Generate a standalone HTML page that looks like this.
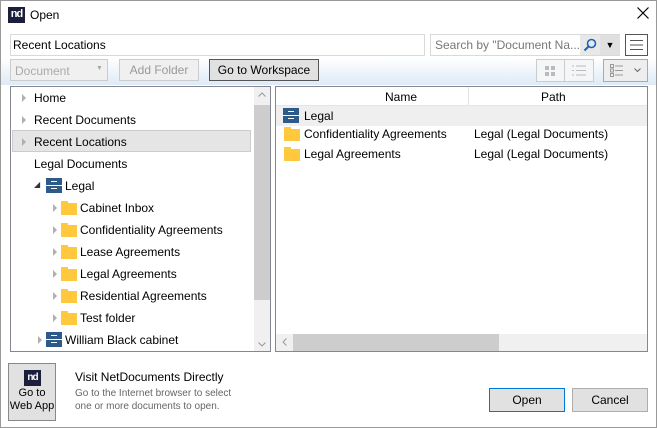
<!DOCTYPE html><html><head><style>
*{box-sizing:border-box;margin:0;padding:0}
body{width:657px;height:428px;background:#fff;font-family:"Liberation Sans",sans-serif;font-size:12px;color:#000;position:relative;overflow:hidden}
.a{position:absolute}
.btn{position:absolute;border:1px solid #adadad;background:#e1e1e1;text-align:center}
.nd{background:#1b1f3b;color:#fff;font-weight:bold;font-size:11px;line-height:15px;text-align:center;width:17px;height:16px;letter-spacing:-1px}
.tri{position:absolute;width:0;height:0;border-top:4px solid transparent;border-bottom:4px solid transparent;border-left:4px solid #b0b0b0}
.fold{position:absolute;width:16px;height:12px;background:#ffc83d}
.fold:before{content:"";position:absolute;left:0;top:-2px;width:7px;height:3px;background:#ffc83d}
.cab{position:absolute;width:16px;height:15px;background:#2d5a88}
.cab:before,.cab:after{content:"";position:absolute;left:5px;width:6px;height:1px;background:#fff}
.cab:before{top:3px}.cab:after{top:10px}
.cab i{position:absolute;left:0;top:7px;width:16px;height:1px;background:#fff}
.t{position:absolute;font-size:12px;white-space:nowrap}
</style></head><body>
<div class="a" style="left:0;top:0;width:657px;height:428px;border:1px solid #999"></div>
<div class="a nd" style="left:8px;top:7px">nd</div>
<div class="t" style="left:30px;top:8px">Open</div>
<svg class="a" style="left:637px;top:7px" width="12" height="12"><path d="M0.5 0.5L11.5 11.5M11.5 0.5L0.5 11.5" stroke="#000" stroke-width="1.2"/></svg>
<div class="a" style="left:10px;top:34px;width:415px;height:22px;border:1px solid #d9d9d9"></div>
<div class="t" style="left:13px;top:38px">Recent Locations</div>
<div class="a" style="left:430px;top:34px;width:190px;height:22px;border:1px solid #d9d9d9"></div>
<div class="t" style="left:435px;top:38px;color:#777">Search by "Document Na...</div>
<div class="a" style="left:580px;top:35px;width:20px;height:20px;background:#e8e8e8"></div>
<svg class="a" style="left:583px;top:38px" width="14" height="14"><circle cx="8.5" cy="5.5" r="4" stroke="#1565c0" stroke-width="1.6" fill="none"/><path d="M5.5 8.5L1.5 12.5" stroke="#1565c0" stroke-width="2"/></svg>
<div class="a" style="left:600px;top:35px;width:20px;height:20px;background:#e0e0e0;font-size:9px;text-align:center;line-height:20px">▼</div>
<div class="a" style="left:625px;top:34px;width:23px;height:22px;border:1px solid #555"></div>
<svg class="a" style="left:630px;top:39px" width="13" height="12"><path d="M0 1.5H13M0 6H13M0 10.5H13" stroke="#555" stroke-width="1"/></svg>
<div class="a" style="left:1px;top:58px;width:655px;height:27px;background:linear-gradient(#fff,#ddeaf7)"></div>
<div class="a" style="left:10px;top:59px;width:98px;height:22px;border:1px solid #ccc;background:#f0f0f0"></div>
<div class="t" style="left:15px;top:64px;color:#aaa">Document</div>
<div class="t" style="left:96px;top:65px;color:#aaa;font-size:7px">▼</div>
<div class="btn" style="left:119px;top:59px;width:80px;height:22px;border-color:#ccc;background:#f0f0f0;color:#999;line-height:20px">Add Folder</div>
<div class="btn" style="left:209px;top:59px;width:110px;height:22px;border-color:#555;line-height:20px">Go to Workspace</div>
<div class="a" style="left:536px;top:59px;width:58px;height:23px;border:1px solid #ccc;background:#f4f6f8"></div>
<div class="a" style="left:564px;top:59px;width:1px;height:23px;background:#ccc"></div>
<svg class="a" style="left:545px;top:66px" width="10" height="10"><rect x="0" y="0" width="4" height="4" fill="#bbb"/><rect x="6" y="0" width="4" height="4" fill="#bbb"/><rect x="0" y="6" width="4" height="4" fill="#bbb"/><rect x="6" y="6" width="4" height="4" fill="#bbb"/></svg>
<svg class="a" style="left:572px;top:65px" width="14" height="11"><path d="M0 1H2M4 1H14M0 5.5H2M4 5.5H14M0 10H2M4 10H14" stroke="#bbb"/></svg>
<div class="a" style="left:603px;top:59px;width:45px;height:23px;border:1px solid #aaa;background:#eee"></div>
<svg class="a" style="left:610px;top:64px" width="14" height="13"><rect x="0.5" y="0.5" width="3" height="3" fill="none" stroke="#999"/><rect x="0.5" y="5" width="3" height="3" fill="none" stroke="#999"/><rect x="0.5" y="9.5" width="3" height="3" fill="none" stroke="#999"/><path d="M5 2H13M5 6.5H13M5 11H13" stroke="#999"/></svg>
<svg class="a" style="left:634px;top:68px" width="7" height="5"><path d="M0.5 0.5L3.5 3.5L6.5 0.5" stroke="#666" fill="none"/></svg>
<!-- left pane -->
<div class="a" style="left:10px;top:86px;width:261px;height:266px;border:1px solid #828790"></div>
<div class="a" style="left:254px;top:87px;width:16px;height:264px;background:#f0f0f0"></div>
<div class="a" style="left:254px;top:105px;width:16px;height:195px;background:#cdcdcd"></div>
<svg class="a" style="left:258px;top:92px" width="8" height="5"><path d="M0.5 4.5L4 1L7.5 4.5" stroke="#999" fill="none"/></svg>
<svg class="a" style="left:258px;top:342px" width="8" height="5"><path d="M0.5 0.5L4 4L7.5 0.5" stroke="#999" fill="none"/></svg>
<div class="a" style="left:12px;top:130px;width:239px;height:22px;background:#e5e5e5;border:1px solid #ccc"></div>
<div class="tri" style="left:22px;top:94px"></div><div class="t" style="left:34px;top:91px">Home</div>
<div class="tri" style="left:22px;top:116px"></div><div class="t" style="left:34px;top:113px">Recent Documents</div>
<div class="tri" style="left:22px;top:138px"></div><div class="t" style="left:34px;top:135px">Recent Locations</div>
<div class="t" style="left:34px;top:157px">Legal Documents</div>
<div class="t" style="left:34px;top:180px;font-size:8px;color:#333">◢</div>
<div class="cab" style="left:46px;top:178px"><i></i></div><div class="t" style="left:65px;top:179px">Legal</div>
<div class="tri" style="left:53px;top:204px"></div><div class="fold" style="left:61px;top:203px"></div><div class="t" style="left:80px;top:201px">Cabinet Inbox</div>
<div class="tri" style="left:53px;top:226px"></div><div class="fold" style="left:61px;top:225px"></div><div class="t" style="left:80px;top:223px">Confidentiality Agreements</div>
<div class="tri" style="left:53px;top:248px"></div><div class="fold" style="left:61px;top:247px"></div><div class="t" style="left:80px;top:245px">Lease Agreements</div>
<div class="tri" style="left:53px;top:270px"></div><div class="fold" style="left:61px;top:269px"></div><div class="t" style="left:80px;top:267px">Legal Agreements</div>
<div class="tri" style="left:53px;top:292px"></div><div class="fold" style="left:61px;top:291px"></div><div class="t" style="left:80px;top:289px">Residential Agreements</div>
<div class="tri" style="left:53px;top:314px"></div><div class="fold" style="left:61px;top:313px"></div><div class="t" style="left:80px;top:311px">Test folder</div>
<div class="tri" style="left:38px;top:336px"></div><div class="cab" style="left:46px;top:332px"><i></i></div><div class="t" style="left:65px;top:333px">William Black cabinet</div>
<!-- right pane -->
<div class="a" style="left:275px;top:86px;width:373px;height:266px;border:1px solid #828790"></div>
<div class="a" style="left:276px;top:87px;width:371px;height:19px;border-bottom:1px solid #e5e5e5"></div>
<div class="a" style="left:468px;top:87px;width:1px;height:19px;background:#e5e5e5"></div>
<div class="t" style="left:385px;top:90px">Name</div>
<div class="t" style="left:541px;top:90px">Path</div>
<div class="a" style="left:276px;top:106px;width:371px;height:20px;background:#efefef"></div>
<div class="cab" style="left:283px;top:108px"><i></i></div><div class="t" style="left:304px;top:109px">Legal</div>
<div class="fold" style="left:284px;top:129px"></div><div class="t" style="left:304px;top:127px">Confidentiality Agreements</div><div class="t" style="left:474px;top:127px">Legal (Legal Documents)</div>
<div class="fold" style="left:284px;top:149px"></div><div class="t" style="left:304px;top:147px">Legal Agreements</div><div class="t" style="left:474px;top:147px">Legal (Legal Documents)</div>
<div class="a" style="left:276px;top:334px;width:371px;height:17px;background:#f0f0f0"></div>
<div class="a" style="left:293px;top:334px;width:206px;height:17px;background:#cdcdcd"></div>
<svg class="a" style="left:282px;top:338px" width="5" height="8"><path d="M4.5 0.5L1 4L4.5 7.5" stroke="#999" fill="none"/></svg>
<!-- bottom -->
<div class="btn" style="left:8px;top:363px;width:48px;height:58px;background:#e1e1e1;border-color:#888"></div>
<div class="a nd" style="left:24px;top:370px;font-size:10px">nd</div>
<div class="t" style="left:8px;top:387px;width:48px;text-align:center;font-size:11px;line-height:13px">Go to<br>Web App</div>
<div class="t" style="left:75px;top:370px">Visit NetDocuments Directly</div>
<div class="t" style="left:75px;top:387px;font-size:10px;color:#666;line-height:13px">Go to the Internet browser to select<br>one or more documents to open.</div>
<div class="btn" style="left:489px;top:388px;width:76px;height:24px;border-color:#0078d7;line-height:22px">Open</div>
<div class="btn" style="left:572px;top:388px;width:76px;height:24px;line-height:22px">Cancel</div>
</body></html>
